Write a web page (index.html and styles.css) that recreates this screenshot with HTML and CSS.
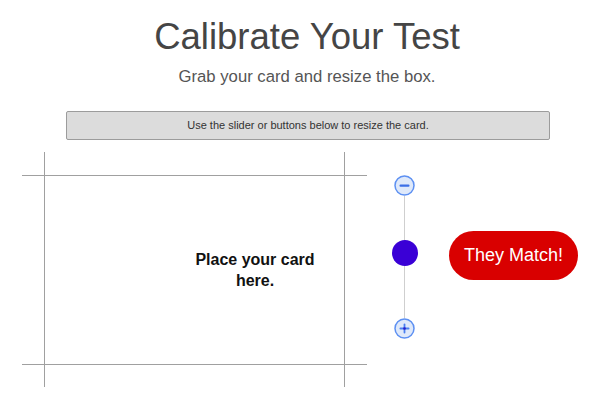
FILE: index.html
```html
<!DOCTYPE html>
<html lang="en">
<head>
<meta charset="utf-8">
<title>Calibrate Your Test</title>
<link rel="stylesheet" href="styles.css">
</head>
<body>
<main class="page">
  <header class="head">
    <h1 class="title">Calibrate Your Test</h1>
    <p class="subtitle">Grab your card and resize the box.</p>
  </header>
  <div class="notice">Use the slider or buttons below to resize the card.</div>
  <section class="workspace">
    <div class="guides">
      <p class="card-label">Place your card here.</p>
    </div>
    <div class="slider">
      <button class="step" aria-label="Smaller">
        <svg width="21" height="21" viewBox="0 0 21 21"><circle cx="10.5" cy="10.5" r="9.5" fill="#dfe9fa" stroke="#5d90f2" stroke-width="1.5"/><rect x="5.5" y="9.5" width="10" height="2.2" rx="1" fill="#3c6fe6"/></svg>
      </button>
      <div class="track"><span class="thumb"></span></div>
      <button class="step" aria-label="Larger">
        <svg width="21" height="21" viewBox="0 0 21 21"><circle cx="10.5" cy="10.5" r="9.5" fill="#dfe9fa" stroke="#5d90f2" stroke-width="1.5"/><rect x="5.5" y="9.6" width="10" height="1.8" rx="0.9" fill="#4a7ff0"/><rect x="9.6" y="5.5" width="1.8" height="10" rx="0.9" fill="#4a7ff0"/><circle cx="10.5" cy="10.5" r="1.3" fill="#2a1cc8"/></svg>
      </button>
    </div>
    <button class="match">They Match!</button>
  </section>
</main>
</body>
</html>
```

FILE: styles.css
```css
* { box-sizing: border-box; }
html, body { margin: 0; padding: 0; background: #fff; }
body { font-family: "Liberation Sans", Arial, Helvetica, sans-serif; }

.page {
  width: 600px;
  padding-top: 17px;
}

.head {
  margin-left: 14px;
  text-align: center;
}

.title {
  margin: 0;
  font-size: 36.5px;
  line-height: 40px;
  font-weight: normal;
  color: #454545;
}

.subtitle {
  margin: 10px 0 0;
  font-size: 16.7px;
  line-height: 20px;
  color: #555;
}

.notice {
  margin: 24px 0 0 66px;
  width: 484px;
  height: 29px;
  background: #dcdcdc;
  border: 1px solid #9c9c9c;
  border-radius: 2px;
  font-size: 11px;
  line-height: 27px;
  color: #333;
  text-align: center;
}

.workspace {
  display: flex;
  align-items: flex-start;
  margin: 12px 0 0 22px;
}

.guides {
  width: 345px;
  height: 235px;
  display: flex;
  align-items: center;
  padding-left: 158px;
  background:
    linear-gradient(#a0a0a0, #a0a0a0) 22px 0 / 1px 100% no-repeat,
    linear-gradient(#a0a0a0, #a0a0a0) 322px 0 / 1px 100% no-repeat,
    linear-gradient(#a0a0a0, #a0a0a0) 0 23px / 100% 1px no-repeat,
    linear-gradient(#a0a0a0, #a0a0a0) 0 212px / 100% 1px no-repeat;
}

.card-label {
  margin: 0;
  width: 150px;
  font-size: 16px;
  line-height: 21px;
  font-weight: bold;
  color: #111;
  text-align: center;
}

.slider {
  margin: 23px 0 0 24px;
  width: 27px;
  display: flex;
  flex-direction: column;
  align-items: center;
}

.step {
  display: block;
  width: 21px;
  height: 21px;
  padding: 0;
  border: 0;
  background: none;
}
.step svg { display: block; }

.track {
  width: 1px;
  height: 122px;
  padding-top: 44px;
  background: #cfcfcf;
  display: flex;
  justify-content: center;
  align-items: flex-start;
}

.thumb {
  flex: none;
  width: 26px;
  height: 26px;
  border-radius: 50%;
  background: #3a00d6;
}

.match {
  margin: 79px 0 0 31px;
  width: 129px;
  height: 49px;
  border: 0;
  border-radius: 25px;
  background: #d90000;
  color: #fff;
  font-family: "Liberation Sans", Arial, Helvetica, sans-serif;
  font-size: 18px;
  padding: 0;
}
```
